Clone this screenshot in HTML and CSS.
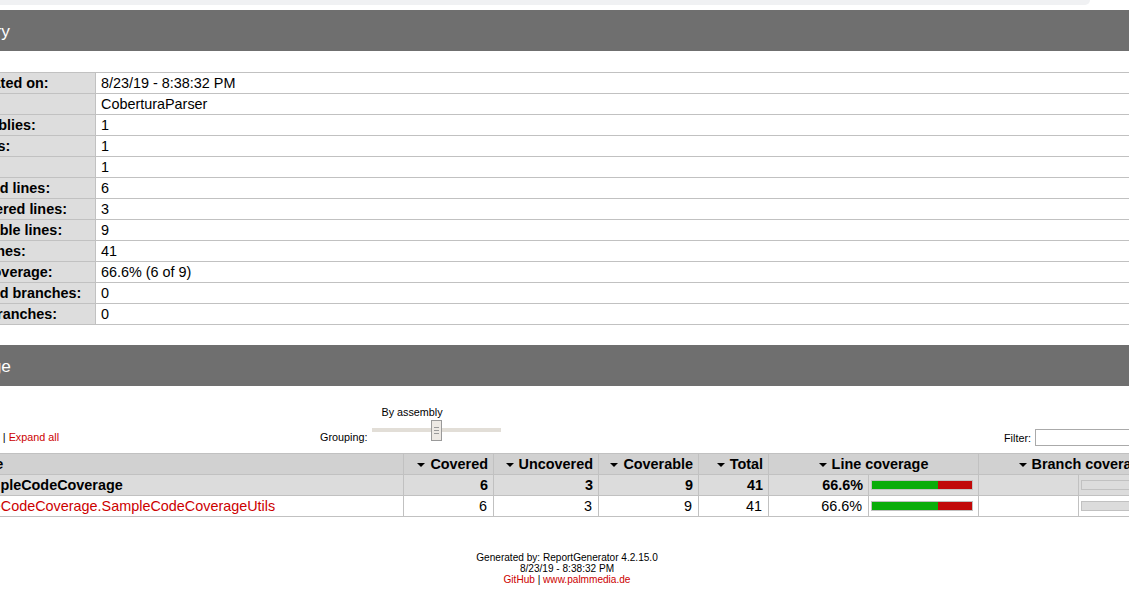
FILE: index.html
```html
<!DOCTYPE html>
<html lang="en">
  <head>
    <meta charset="UTF-8" />
    <meta name="viewport" content="width=device-width, initial-scale=1.0" />
    <title>Summary - Coverage Report</title>
    <link rel="stylesheet" href="styles.css">
  </head>
  <body>
    <div class="topbar"></div>
    <div class="viewport">
      <div class="content">
        <h1>Summary</h1>
        <table class="overview summary">
          <colgroup>
            <col class="label-col">
            <col>
          </colgroup>
          <tr><th>Generated on:</th><td>8/23/19 - 8:38:32 PM</td></tr>
          <tr><th>Parser:</th><td>CoberturaParser</td></tr>
          <tr><th>Assemblies:</th><td>1</td></tr>
          <tr><th>Classes:</th><td>1</td></tr>
          <tr><th>Files:</th><td>1</td></tr>
          <tr><th>Covered lines:</th><td>6</td></tr>
          <tr><th>Uncovered lines:</th><td>3</td></tr>
          <tr><th>Coverable lines:</th><td>9</td></tr>
          <tr><th>Total lines:</th><td>41</td></tr>
          <tr><th>Line coverage:</th><td>66.6% (6 of 9)</td></tr>
          <tr><th>Covered branches:</th><td>0</td></tr>
          <tr><th>Total branches:</th><td>0</td></tr>
        </table>

        <h1>Coverage</h1>
        <div class="customizebox">
          <div class="links"><a href="#">Collapse all</a> | <a href="#">Expand all</a></div>
          <div class="grouping">
            <span class="grouping-label">Grouping:</span>
            <div class="slider-box">
              <span class="grouping-desc">By assembly</span>
              <div class="slider">
                <span class="track"></span>
                <span class="handle"><span class="grip"></span></span>
              </div>
            </div>
          </div>
          <div class="filter">Filter:<input type="text" id="filter"></div>
        </div>

        <table class="overview coverage">
          <colgroup>
            <col class="c-name">
            <col class="c-covered">
            <col class="c-uncovered">
            <col class="c-coverable">
            <col class="c-total">
            <col class="c-pct">
            <col class="c-bar">
            <col class="c-pct">
            <col class="c-bar">
          </colgroup>
          <thead>
            <tr>
              <th class="name-h"><i class="sort"></i>Name</th>
              <th class="right"><i class="sort"></i>Covered</th>
              <th class="right"><i class="sort"></i>Uncovered</th>
              <th class="right"><i class="sort"></i>Coverable</th>
              <th class="right"><i class="sort"></i>Total</th>
              <th class="center" colspan="2"><i class="sort"></i>Line coverage</th>
              <th class="center" colspan="2"><i class="sort"></i>Branch coverage</th>
            </tr>
          </thead>
          <tbody>
            <tr class="namespace">
              <th><a href="#" class="expander"></a>SampleCodeCoverage</th>
              <th class="right">6</th>
              <th class="right">3</th>
              <th class="right">9</th>
              <th class="right">41</th>
              <th class="right pct">66.6%</th>
              <th class="barcell"><div class="bar"><span class="green w66"></span><span class="red"></span></div></th>
              <th></th>
              <th class="barcell"><div class="bar"></div></th>
            </tr>
            <tr>
              <td><a href="#">SampleCodeCoverage.SampleCodeCoverageUtils</a></td>
              <td class="right">6</td>
              <td class="right">3</td>
              <td class="right">9</td>
              <td class="right">41</td>
              <td class="right pct">66.6%</td>
              <td class="barcell"><div class="bar"><span class="green w66"></span><span class="red"></span></div></td>
              <td></td>
              <td class="barcell"><div class="bar"></div></td>
            </tr>
          </tbody>
        </table>

        <div class="footer">
          Generated by: ReportGenerator 4.2.15.0<br>
          8/23/19 - 8:38:32 PM<br>
          <a href="#">GitHub</a> | <a href="#">www.palmmedia.de</a>
        </div>
      </div>
    </div>
  </body>
</html>
```

FILE: styles.css
```css
* {
  box-sizing: border-box;
}

html {
  font-family: "Liberation Sans", Arial, sans-serif;
  font-size: 14.4px;
}

body {
  margin: 0;
  background: #fff;
  color: #000;
  overflow: hidden;
}

a {
  color: #c00;
  text-decoration: none;
}

.topbar {
  width: 1090px;
  height: 5px;
  margin-bottom: 5px;
  background: #f0f1f3;
  border-bottom-right-radius: 8px;
}

.viewport {
  overflow: hidden;
}

/* page is scrolled sideways, so the content starts left of the window */
.content {
  width: 1242px;
  margin-left: -54px;
}

h1 {
  font-size: 17.28px;
  font-weight: normal;
  line-height: 21px;
  color: #fff;
  background-color: #6f6f6f;
  padding: 11px 10px 9px;
  margin: 20px -20px;
}

.content h1:first-child {
  margin-top: 0;
  margin-bottom: 21px;
}

.overview {
  width: 100%;
  border: 1px solid #c1c1c1;
  border-collapse: collapse;
  table-layout: fixed;
}

.overview th,
.overview td {
  border: 1px solid #c1c1c1;
  line-height: 16px;
  white-space: nowrap;
  overflow: hidden;
}

.overview th {
  padding: 2px 4px;
  background-color: #ddd;
  text-align: left;
}

.overview td {
  padding: 2px 5px;
}

.label-col {
  width: 149px;
}

.customizebox {
  display: grid;
  grid-template-columns: 1fr 1fr 2fr;
  align-items: end;
  font-size: 10.8px;
  margin-bottom: 7px;
}

.links {
  padding-bottom: 3px;
  margin-left: -2px;
}

.grouping {
  justify-self: center;
  display: flex;
  align-items: flex-end;
  gap: 5px;
  margin-left: -2px;
}

.grouping-label {
  padding-bottom: 3px;
}

.slider-box {
  display: flex;
  flex-direction: column;
}

.grouping-desc {
  padding-left: 9px;
  line-height: 12px;
}

.slider {
  position: relative;
  width: 129px;
  height: 28px;
}

.track {
  position: absolute;
  left: 0;
  right: 0;
  top: 10px;
  height: 4px;
  background: #e2ded7;
}

.handle {
  position: absolute;
  left: 59px;
  top: 2px;
  width: 11px;
  height: 21px;
  background: #ede9e4;
  border: 1px solid #9a9a9a;
  display: flex;
  align-items: center;
  justify-content: center;
}

.grip {
  width: 5px;
  height: 7px;
  background: repeating-linear-gradient(#9a9a9a 0 1px, transparent 1px 3px);
}

.filter {
  justify-self: end;
  display: flex;
  align-items: center;
}

#filter {
  width: 153px;
  height: 17px;
  margin: 0 0 0 4px;
  padding: 0 2px;
  border: 1px solid #aaa;
  font: inherit;
}

.c-name { width: 457px; }
.c-covered { width: 90px; }
.c-uncovered { width: 105px; }
.c-coverable { width: 100px; }
.c-total { width: 70px; }
.c-pct { width: 100px; }
.c-bar { width: 110px; }

.coverage thead th {
  background-color: #d1d1d1;
}

.coverage tr.namespace th {
  background-color: #dcdcdc;
}

.coverage tr.namespace a {
  color: #000;
}

.name-h {
  padding-left: 10px;
}

.sort {
  display: inline-block;
  width: 0;
  height: 0;
  border-left: 4px solid transparent;
  border-right: 4px solid transparent;
  border-top: 4px solid #000;
  margin-right: 5px;
  vertical-align: middle;
}

.expander {
  display: inline-block;
  width: 15px;
  margin-right: 4px;
}

.overview .right {
  text-align: right;
}

.overview th.right {
  padding-right: 5px;
}

.overview td.right {
  padding-right: 6px;
}

.overview .pct {
  padding-right: 9px;
}

.overview .center {
  text-align: center;
}

.overview .barcell {
  padding-left: 2px;
}

.bar {
  display: flex;
  width: 102px;
  height: 10px;
  border: 1px solid #c1c1c1;
  background-color: #dcdcdc;
}

.green {
  background-color: #0aad0a;
}

.red {
  flex: 1;
  background-color: #c10909;
}

.w66 {
  width: 66%;
}

.footer {
  font-size: 10.08px;
  text-align: center;
  margin-top: 35px;
}
```
